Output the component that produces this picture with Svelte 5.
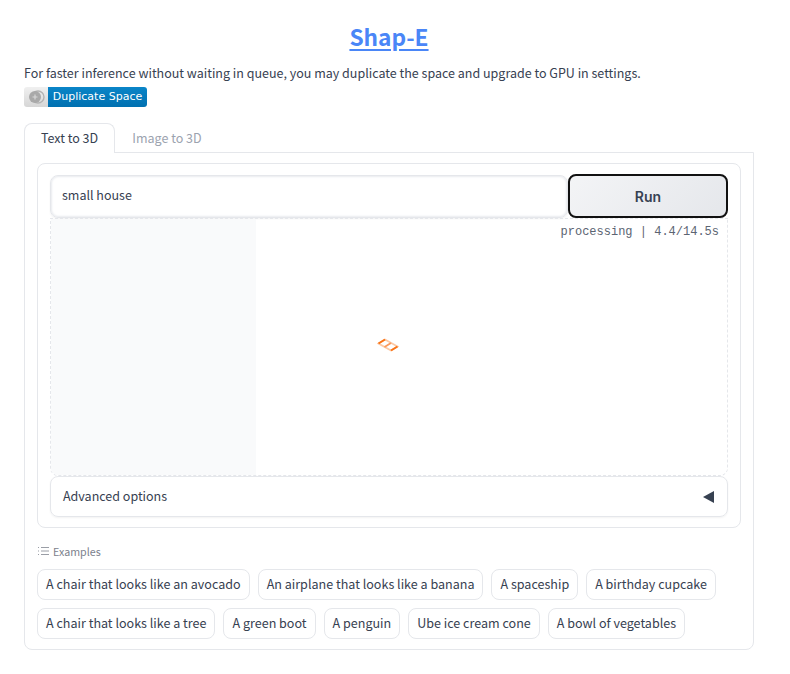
<script>
  const row1 = ['A chair that looks like an avocado', 'An airplane that looks like a banana', 'A spaceship', 'A birthday cupcake']
  const row2 = ['A chair that looks like a tree', 'A green boot', 'A penguin', 'Ube ice cream cone', 'A bowl of vegetables']
  const examples = [...row1, ...row2]
</script>

<div class="page">
  <h1><a href="#top">Shap-E</a></h1>
  <p class="intro">For faster inference without waiting in queue, you may duplicate the space and upgrade to GPU in settings.</p>
  <div class="badge">
    <span class="badge-icon">
      <svg width="18" height="14" viewBox="0 0 18 14">
        <circle cx="11" cy="7" r="6" fill="none" stroke="#b4b4b4" stroke-width="1.4" />
        <circle cx="8" cy="7" r="6" fill="#a9a9a9" />
        <path d="M5.5 7h5M8 4.5v5" stroke="#d8d8d8" stroke-width="1.2" />
      </svg>
    </span>
    <span class="badge-label">Duplicate Space</span>
  </div>

  <div class="tabs">
    <button class="tab selected">Text to 3D</button>
    <button class="tab">Image to 3D</button>
  </div>

  <div class="panel">
    <div class="block">
      <div class="prompt-row">
        <div class="prompt">small house</div>
        <button class="run">Run</button>
      </div>
      <div class="output">
        <div class="eta-bar"></div>
        <div class="eta">processing | 4.4/14.5s</div>
        <svg class="loader" width="24" height="16" viewBox="0 0 24 16" fill="none">
          <path d="M1.5 5.5L8 1.5L20.5 8.5L14 12.5Z" stroke="#fcc9a5" stroke-width="1.8" />
          <path d="M7.5 9L14 5" stroke="#fb9a5c" stroke-width="1.8" />
          <path d="M1.5 5.5L8 1.5M14 12.5L20.5 8.5" stroke="#f97316" stroke-width="2" />
        </svg>
      </div>
      <div class="advanced">
        <span>Advanced options</span>
        <span class="arrow"></span>
      </div>
    </div>

    <div class="examples-label">
      <svg width="11" height="10" viewBox="0 0 11 10" fill="none" stroke="#9a9ea6" stroke-width="1">
        <path d="M3 1.5h8M3 5h8M3 8.5h8" />
        <path d="M0 1.5h1.5M0 5h1.5M0 8.5h1.5" stroke-dasharray="1 0.5" />
      </svg>
      Examples
    </div>
    <div class="examples">
      {#each examples as example}
        <button class="chip">{example}</button>
      {/each}
    </div>
  </div>
</div>

<style>
  :global(body) {
    background: #fff;
  }

  .page {
    box-sizing: border-box;
    width: 790px;
    height: 674px;
    padding: 0 36px 0 24px;
    font-family: 'Noto Sans CJK SC', sans-serif;
    font-size: 12.5px;
    color: #374151;
    overflow: hidden;
  }

  h1 {
    margin: 0;
    padding-top: 18px;
    height: 38px;
    text-align: center;
    font-size: 22.7px;
    line-height: 38px;
    font-weight: 700;
  }

  h1 a {
    color: #4a86f7;
    text-decoration: underline;
    text-underline-offset: 3px;
  }

  .intro {
    margin: 6px 0 0;
    height: 25px;
    line-height: 21px;
    white-space: nowrap;
  }

  .badge {
    display: flex;
    width: 123px;
    height: 20px;
    border-radius: 3px;
    overflow: hidden;
    font-family: 'DejaVu Sans', sans-serif;
    font-size: 11px;
    line-height: 20px;
  }

  .badge-icon {
    display: flex;
    align-items: center;
    justify-content: center;
    width: 24px;
    background: linear-gradient(#f0f0f0, #d6d6d6);
  }

  .badge-label {
    flex: 1;
    text-align: center;
    color: #fff;
    background: linear-gradient(#0a85c8, #0070b0);
    white-space: nowrap;
  }

  .tabs {
    display: flex;
    margin-top: 16px;
    height: 30px;
  }

  .tab {
    box-sizing: border-box;
    height: 30px;
    width: 91px;
    padding: 0 0 2px;
    border: 1px solid transparent;
    border-bottom: 0;
    background: none;
    font: inherit;
    color: #9ca3af;
  }

  .tab + .tab {
    padding-left: 13px;
  }

  .tab.selected {
    position: relative;
    z-index: 1;
    color: #374151;
    background: #fff;
    border-color: #e5e7eb;
    border-radius: 8px 8px 0 0;
  }

  .panel {
    box-sizing: border-box;
    height: 498px;
    margin-top: -1px;
    padding: 10px 12px 0;
    border: 1px solid #e5e7eb;
    border-radius: 0 0 8px 8px;
  }

  .block {
    box-sizing: border-box;
    height: 365px;
    padding: 10px 12px 0;
    border: 1px solid #e5e7eb;
    border-radius: 8px;
  }

  .prompt-row {
    display: flex;
    height: 44px;
  }

  .prompt {
    box-sizing: border-box;
    width: 518px;
    height: 43px;
    margin-top: 1px;
    padding-left: 11px;
    border: 1px solid #e5e7eb;
    border-radius: 8px;
    box-shadow: inset 0 0 2px 1px #e9ebef, 0 1px 2px #0000000d;
    line-height: 38px;
  }

  .run {
    box-sizing: border-box;
    flex: 1;
    padding: 0;
    border: 2px solid #111;
    border-radius: 8px;
    background: linear-gradient(135deg, #f3f4f6, #e5e7eb);
    font-family: Inter, sans-serif;
    font-size: 14px;
    font-weight: 600;
    color: #374151;
  }

  .output {
    position: relative;
    box-sizing: border-box;
    display: flex;
    align-items: center;
    justify-content: center;
    height: 258px;
    border: 1px dashed #e5e7eb;
    border-radius: 0 0 8px 8px;
    overflow: hidden;
  }

  .eta-bar {
    position: absolute;
    left: 0;
    top: 0;
    bottom: 0;
    width: 205px;
    background: #f9fafb;
  }

  .eta {
    position: absolute;
    top: 6px;
    right: 8px;
    font-family: 'Liberation Mono', monospace;
    font-size: 12px;
    line-height: 14px;
    color: #5b6472;
  }

  .loader {
    margin: 0 0 2px 0;
  }

  .advanced {
    box-sizing: border-box;
    display: flex;
    align-items: center;
    justify-content: space-between;
    height: 41px;
    padding: 0 13px 0 12px;
    border: 1px solid #e5e7eb;
    border-radius: 8px;
    box-shadow: 0 1px 2px #0000000d;
  }

  .advanced span:first-child {
    margin-top: -3px;
  }

  .arrow {
    width: 0;
    height: 0;
    border-style: solid;
    border-width: 6.5px 11px 6.5px 0;
    border-color: transparent #374151 transparent transparent;
  }

  .examples-label {
    display: flex;
    align-items: center;
    gap: 4px;
    margin-top: 16px;
    height: 14px;
    padding-left: 1px;
    font-size: 10.7px;
    color: #7b818c;
  }

  .examples {
    display: flex;
    flex-wrap: wrap;
    gap: 8px;
    margin-top: 11px;
  }

  .chip {
    box-sizing: border-box;
    height: 31px;
    padding: 0 8px 2px;
    border: 1px solid #e5e7eb;
    border-radius: 8px;
    background: #fff;
    font: inherit;
    font-size: 12.55px;
    color: #374151;
    white-space: nowrap;
  }
</style>
